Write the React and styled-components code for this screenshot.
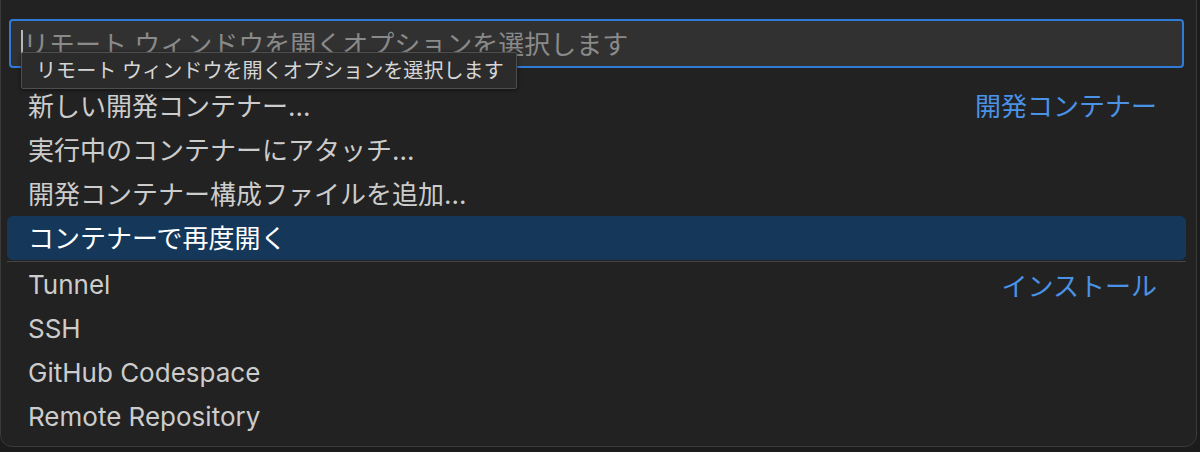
import React from 'react'
import styled, { createGlobalStyle } from 'styled-components';

const GlobalStyle = createGlobalStyle`
  html, body {
    margin: 0;
    padding: 0;
    background: #1c1c1c;
  }
  body {
    font-family: Inter, "Noto Sans CJK JP", sans-serif;
  }
`;

const items = [
    { label: '新しい開発コンテナー...', detail: '開発コンテナー' },
    { label: '実行中のコンテナーにアタッチ...' },
    { label: '開発コンテナー構成ファイルを追加...' },
    { label: 'コンテナーで再度開く', selected: true, separator: true },
    { label: 'Tunnel', detail: 'インストール' },
    { label: 'SSH' },
    { label: 'GitHub Codespace' },
    { label: 'Remote Repository' },
];

const PLACEHOLDER = 'リモート ウィンドウを開くオプションを選択します';

const QuickPick = () => {
    return (
        <Panel>
            <InputBox>
                <Caret />
                <Placeholder>{PLACEHOLDER}</Placeholder>
            </InputBox>
            <Tooltip>{PLACEHOLDER}</Tooltip>
            <List>
                {items.map((item, index) => (
                    <React.Fragment key={index}>
                        <Row selected={item.selected}>
                            <Label>{item.label}</Label>
                            {item.detail && <Detail>{item.detail}</Detail>}
                        </Row>
                        {item.separator && <Separator />}
                    </React.Fragment>
                ))}
            </List>
        </Panel>
    )
}

export default function App() {
    return (
        <>
            <GlobalStyle />
            <QuickPick />
        </>
    )
}

const Panel = styled.div`
position: relative;
width: 1197px;
height: 448px;
margin-top: -1px;
box-sizing: border-box;
background-color: #222222;
border: 1px solid #3a3a3a;
border-radius: 0 0 12px 12px;
padding: 19px 12px 0 8px;
font-family: Inter, "Noto Sans CJK JP", sans-serif;
`;

const InputBox = styled.div`
height: 49px;
box-sizing: border-box;
background-color: #313131;
border: 2px solid #2f7bd6;
border-radius: 4px;
display: flex;
align-items: center;
padding: 0 0 3px 10px;
`;

const Caret = styled.span`
width: 2px;
height: 27px;
margin-top: 3px;
background-color: #b8b8b8;
flex-shrink: 0;
`;

const Placeholder = styled.span`
font-size: 26px;
color: #8a8a8a;
white-space: nowrap;
`;

const Tooltip = styled.div`
position: absolute;
left: 20px;
top: 52px;
height: 37px;
box-sizing: border-box;
padding: 0 12px 2px 14px;
display: flex;
align-items: center;
background-color: #2b2b2b;
border: 1px solid #4e4e4e;
border-radius: 2px;
box-shadow: 0 1px 4px rgba(0, 0, 0, 0.5);
color: #d6d6d6;
font-size: 20.1px;
white-space: nowrap;
`;

const List = styled.div`
display: flex;
flex-direction: column;
margin: 16px -2px 0 -2px;
`;

const Row = styled.div`
height: 44px;
box-sizing: border-box;
display: flex;
align-items: center;
justify-content: space-between;
padding: 0 29px 3px 21px;
border-radius: 6px;
background-color: ${p => p.selected ? '#15375a' : 'transparent'};
color: ${p => p.selected ? '#ffffff' : '#cccccc'};
font-size: 26px;
`;

const Label = styled.span`
white-space: nowrap;
`;

const Detail = styled.span`
color: #4a92e6;
font-size: 26px;
white-space: nowrap;
`;

const Separator = styled.div`
height: 1px;
background-color: #454545;
margin: 1px 0 2px 0;
`;
